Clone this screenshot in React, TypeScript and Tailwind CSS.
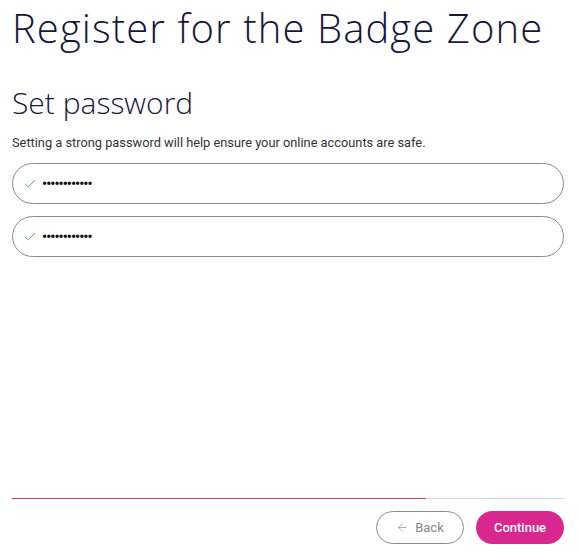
import { Check, ArrowLeft } from "lucide-react";

const heading = { fontFamily: "'Open Sans', Lato, sans-serif" };

function PasswordField() {
  return (
    <div className="flex h-[41px] items-center gap-[5px] rounded-full border border-[#8a8a8a] px-[10px]">
      <Check className="h-[14px] w-[14px] text-[#3f9a4a]" strokeWidth={1.5} />
      <span className="text-[14px] font-bold leading-none tracking-[-0.9px] text-[#111]">••••••••••••</span>
    </div>
  );
}

export default function App() {
  return (
    <div
      className="flex h-[556px] w-[579px] flex-col bg-white pb-[12px] pl-[12px] pr-[15px]"
      style={{ fontFamily: "Roboto, 'Liberation Sans', sans-serif" }}
    >
      <h1 className="mt-[4px] text-[40px] font-light leading-[48px] tracking-[1.1px] text-[#17173b]" style={heading}>
        Register for the Badge Zone
      </h1>
      <h2 className="mt-[32px] text-[30px] font-light leading-[38px] text-[#17173b]" style={heading}>
        Set password
      </h2>
      <p className="mt-[13px] text-[12.8px] leading-[16px] text-[#333]">
        Setting a strong password will help ensure your online accounts are safe.
      </p>
      <div className="mt-[12px] flex flex-col gap-[12px]">
        <PasswordField />
        <PasswordField />
      </div>
      <div className="flex-1" />
      <div className="flex h-[1px] w-full bg-[#d6d6d6]">
        <div className="h-full w-[75%] bg-[#c8358a]" />
      </div>
      <div className="mt-[12px] flex justify-end gap-[12px]">
        <button className="flex h-[33px] w-[88px] items-center justify-center gap-[6px] rounded-full border border-[#8a8a8a] text-[13px] text-[#888]">
          <ArrowLeft className="h-[13px] w-[13px]" strokeWidth={1.25} />
          Back
        </button>
        <button className="h-[33px] w-[88px] rounded-full bg-[#d8278f] text-[13px] font-medium text-white">
          Continue
        </button>
      </div>
    </div>
  );
}
